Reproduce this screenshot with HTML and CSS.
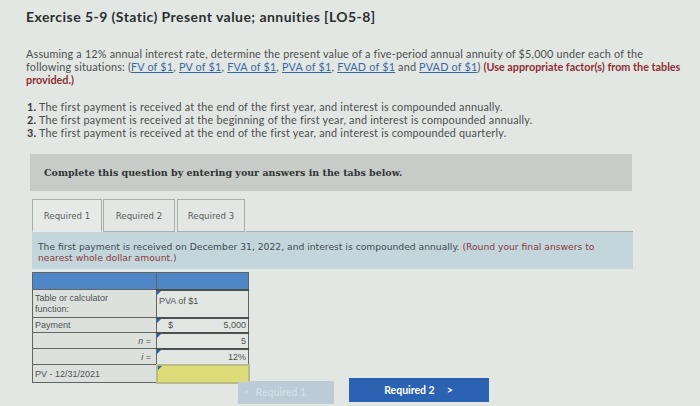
FILE: index.html
```html
<!DOCTYPE html>
<html lang="en">
<head>
<meta charset="utf-8">
<title>Exercise 5-9</title>
<link rel="stylesheet" href="styles.css">
</head>
<body>
<div class="page">
  <h1 class="title">Exercise 5-9 (Static) Present value; annuities [LO5-8]</h1>
  <p class="intro">Assuming a 12% annual interest rate, determine the present value of a five-period annual annuity of $5,000 under each of the following situations: (<a href="#">FV of $1</a>, <a href="#">PV of $1</a>, <a href="#">FVA of $1</a>, <a href="#">PVA of $1</a>, <a href="#">FVAD of $1</a> and <a href="#">PVAD of $1</a>) <strong class="note">(Use appropriate factor(s) from the tables provided.)</strong></p>
  <ol class="cases">
    <li><b>1.</b> The first payment is received at the end of the first year, and interest is compounded annually.</li>
    <li><b>2.</b> The first payment is received at the beginning of the first year, and interest is compounded annually.</li>
    <li><b>3.</b> The first payment is received at the end of the first year, and interest is compounded quarterly.</li>
  </ol>
  <div class="complete">Complete this question by entering your answers in the tabs below.</div>
  <div class="tabs">
    <div class="tab t1 active">Required 1</div>
    <div class="tab t2">Required 2</div>
    <div class="tab t3">Required 3</div>
    <div class="tab-fill"></div>
  </div>
  <div class="instr">The first payment is received on December 31, 2022, and interest is compounded annually. <span class="red">(Round your final answers to nearest whole dollar amount.)</span></div>
  <div class="work">
    <table class="calc">
      <tr class="head"><th></th><th></th></tr>
      <tr class="r1"><td class="lbl">Table or calculator<br>function:</td><td class="inp">PVA of $1</td></tr>
      <tr class="r2"><td class="lbl">Payment</td><td class="inp"><span class="cur">$</span><span class="val">5,000</span></td></tr>
      <tr class="r3"><td class="lbl right"><i>n</i> =</td><td class="inp"><span class="val">5</span></td></tr>
      <tr class="r4"><td class="lbl right"><i>i</i> =</td><td class="inp"><span class="val">12%</span></td></tr>
      <tr class="r5"><td class="lbl">PV - 12/31/2021</td><td class="inp yellow"></td></tr>
    </table>
    <div class="nav">
      <div class="btn prev"><span class="chev">&lt;</span> Required 1</div>
      <div class="btn next">Required 2 <span class="chev">&gt;</span></div>
    </div>
  </div>
</div>
</body>
</html>
```
FILE: styles.css
```css
html, body {
  margin: 0;
  padding: 0;
}
body {
  background: #e3e7e4;
  font-family: Lato, "Liberation Sans", Arial, sans-serif;
  color: #4a4f4e;
  width: 700px;
  height: 406px;
  overflow: hidden;
}
.page {
  padding: 8px 0 0 26px;
}
.title {
  margin: 0;
  font-size: 14px;
  line-height: 17px;
  letter-spacing: 0.45px;
  font-weight: 700;
  color: #2b2f2e;
}
.intro {
  margin: 22px 0 0 0;
  width: 664px;
  font-size: 10.8px;
  line-height: 13px;
  letter-spacing: 0.2px;
}
.intro a {
  color: #3767a3;
  text-decoration: underline;
}
.note {
  color: #8d2f33;
  font-weight: 700;
  letter-spacing: 0;
}
.cases {
  list-style: none;
  margin: 14px 0 0 1px;
  padding: 0;
  font-size: 10.8px;
  line-height: 13px;
  letter-spacing: 0.22px;
}
.cases b {
  color: #353938;
}
.complete {
  margin: 15px 0 0 4px;
  width: 602px;
  height: 37px;
  box-sizing: border-box;
  padding: 0 0 0 14px;
  display: flex;
  align-items: center;
  background: #c8ccc9;
  font-family: "DejaVu Serif", "Liberation Serif", serif;
  font-weight: 700;
  font-size: 9.5px;
  color: #2f3433;
}
.tabs {
  display: flex;
  margin: 8px 0 0 6px;
  width: 601px;
  height: 33px;
  font-family: "DejaVu Sans", Verdana, sans-serif;
  font-size: 8.6px;
  color: #59605f;
}
.tab {
  box-sizing: border-box;
  border: 1px solid #a9afac;
  margin-right: 1px;
  display: flex;
  align-items: center;
  justify-content: center;
  height: 33px;
}
.tab.t1 { width: 70px; }
.tab.t2 { width: 72px; margin-right: 2px; }
.tab.t3 { width: 68px; }
.tab.active {
  border-bottom-color: transparent;
  background: #e6eae7;
}
.tab-fill {
  flex: 1;
  border-bottom: 1px solid #a9afac;
}
.instr {
  margin: 0 0 0 6px;
  width: 601px;
  height: 37px;
  box-sizing: border-box;
  padding: 9px 6px 0 6px;
  background: #c3d6db;
  font-family: "DejaVu Sans", Verdana, sans-serif;
  font-size: 9.2px;
  line-height: 11px;
  color: #3d4b52;
}
.instr .red {
  color: #8a3a3f;
}
.work {
  display: flex;
  align-items: flex-end;
  margin: 3px 0 0 6px;
}
.calc {
  border-collapse: collapse;
  font-family: "Liberation Sans", Arial, sans-serif;
  font-size: 9px;
  color: #4d5352;
}
.calc td, .calc th {
  border: 1px solid #5f6563;
  padding: 0 2px;
}
.calc .head th {
  background: #4f86c6;
}
.calc .head { height: 17px; }
.calc .r1 { height: 28px; }
.calc .r2 { height: 15px; }
.calc .r3 { height: 16px; }
.calc .r4 { height: 16px; }
.calc .r5 { height: 18px; }
.calc .head th:first-child {
  width: 119px;
}
.calc .head th:last-child {
  width: 87px;
}
.calc .r1 td { line-height: 11px; }
.lbl {
  background: #dde1de;
  vertical-align: middle;
}
.lbl.right {
  text-align: right;
  padding-right: 5px;
}
.inp {
  position: relative;
  background: #e2e6e3;
  border-top: 2px solid #4b5150 !important;
  vertical-align: middle;
}
.inp::before {
  content: "";
  position: absolute;
  left: 0;
  top: 0;
  border-top: 4px solid #2f62ad;
  border-right: 4px solid transparent;
}
.calc .r1 .inp {
  vertical-align: top;
  padding-top: 5px;
}
.inp .cur {
  margin-left: 9px;
}
.inp .val {
  float: right;
}
.inp.yellow {
  background: #dcdc78;
  border: 2px solid #b9bc88 !important;
}
.nav {
  display: flex;
  align-items: flex-end;
  gap: 15px;
  margin: 0 0 -20px -12px;
  font-family: Lato, "Liberation Sans", Arial, sans-serif;
  font-weight: 700;
  font-size: 10.5px;
}
.btn {
  height: 24px;
  display: flex;
  align-items: center;
  justify-content: center;
  box-sizing: border-box;
}
.btn.prev {
  width: 96px;
  height: 23px;
  background: #bccbd5;
  color: #d3dde5;
  justify-content: flex-start;
  padding-left: 6px;
  gap: 6px;
}
.btn.next {
  width: 140px;
  margin-bottom: 2px;
  background: #2c62b2;
  color: #ffffff;
  gap: 12px;
}
.chev {
  font-weight: 700;
}
```
